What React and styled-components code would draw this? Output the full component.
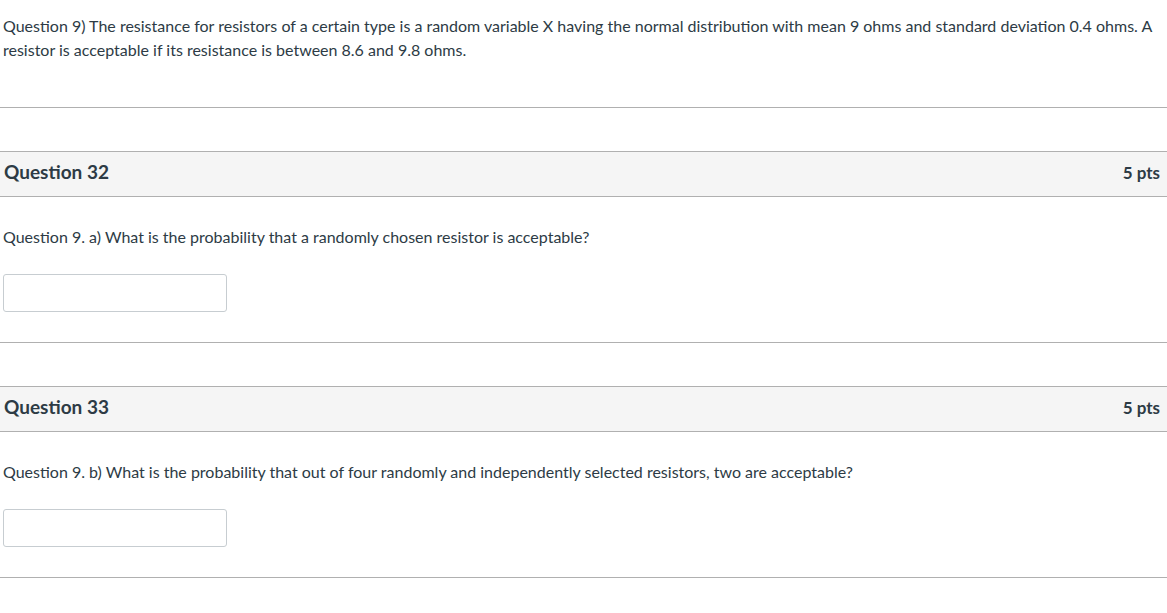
import React from "react";
import styled, { createGlobalStyle } from "styled-components";

const GlobalStyle = createGlobalStyle`
  body {
    margin: 0;
    background: #ffffff;
    font-family: Lato, "Noto Sans", sans-serif;
    color: #2d3b45;
  }
`;

const Page = styled.div`
  width: 1167px;
  overflow: hidden;
`;

const Intro = styled.p`
  margin: 0;
  padding: 14px 8px 45px 3px;
  font-size: 16px;
  line-height: 24px;
`;

const Divider = styled.div`
  border-top: 1px solid #b0b0b0;
`;

const Section = styled.section`
  padding-top: 43px;
`;

const Header = styled.div`
  display: flex;
  align-items: center;
  justify-content: space-between;
  box-sizing: border-box;
  height: 46px;
  padding: 0 7px 5px 4px;
  background: #f5f5f5;
  border-top: 1px solid #b0b0b0;
  border-bottom: 1px solid #b0b0b0;
`;

const Title = styled.h2`
  margin: 0;
  font-size: 19px;
  font-weight: 700;
`;

const Points = styled.span`
  font-size: 17px;
  font-weight: 700;
  padding-top: 2px;
`;

const Body = styled.div`
  padding: 28px 0 30px 3px;
`;

const Prompt = styled.p`
  margin: 0 0 25px;
  font-size: 16px;
  line-height: 24px;
`;

const Answer = styled.input`
  display: block;
  box-sizing: border-box;
  width: 224px;
  height: 38px;
  border: 1px solid #c7cdd1;
  border-radius: 3px;
  background: #fff;
`;

const questions = [
  {
    id: 32,
    text: "Question 9. a) What is the probability that a randomly chosen resistor is acceptable?",
  },
  {
    id: 33,
    text: "Question 9. b) What is the probability that out of four randomly and independently selected resistors, two are acceptable?",
  },
];

export default function App() {
  return (
    <Page>
      <GlobalStyle />
      <Intro>
        Question 9) The resistance for resistors of a certain type is a random variable X having the
        normal distribution with mean 9 ohms and standard deviation 0.4 ohms. A resistor is
        acceptable if its resistance is between 8.6 and 9.8 ohms.
      </Intro>
      <Divider />
      {questions.map((q) => (
        <Section key={q.id}>
          <Header>
            <Title>Question {q.id}</Title>
            <Points>5 pts</Points>
          </Header>
          <Body>
            <Prompt>{q.text}</Prompt>
            <Answer type="text" />
          </Body>
          <Divider />
        </Section>
      ))}
    </Page>
  );
}
